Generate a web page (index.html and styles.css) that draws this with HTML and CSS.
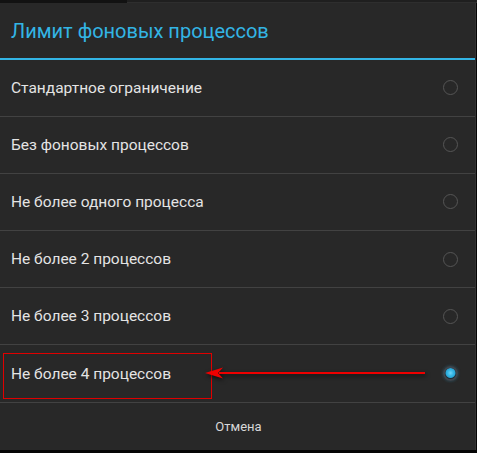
FILE: index.html
```
<!DOCTYPE html>
<html lang="ru">
<head>
<meta charset="utf-8">
<title>Лимит фоновых процессов</title>
<link rel="stylesheet" href="styles.css">
</head>
<body>
<div class="topstrip"><div class="ts-left"></div><div class="ts-right"></div></div>
<div class="dialog">
  <div class="title">Лимит фоновых процессов</div>
  <div class="list">
    <div class="row"><span class="label">Стандартное ограничение</span><span class="radio"></span></div>
    <div class="row"><span class="label">Без фоновых процессов</span><span class="radio"></span></div>
    <div class="row"><span class="label">Не более одного процесса</span><span class="radio"></span></div>
    <div class="row"><span class="label">Не более 2 процессов</span><span class="radio"></span></div>
    <div class="row"><span class="label">Не более 3 процессов</span><span class="radio"></span></div>
    <div class="row"><span class="label">Не более 4 процессов</span><span class="radio checked"></span></div>
  </div>
  <div class="footer"><span class="btn">Отмена</span></div>
  <div class="highlight"></div>
  <svg class="arrow" width="230" height="20" viewBox="0 0 230 20">
    <line x1="16" y1="10" x2="222" y2="10" stroke="#ee0000" stroke-width="2"/>
    <polygon points="2,10 20,4.5 15,10 20,15.5" fill="#ee0000"/>
  </svg>
</div>
<div class="bottomstrip"></div>
</body>
</html>
```
FILE: styles.css
```
html, body {
  margin: 0;
  padding: 0;
}
body {
  width: 477px;
  height: 453px;
  background: #050505;
  font-family: Roboto, "Noto Sans", sans-serif;
  overflow: hidden;
}
.topstrip {
  display: flex;
  height: 3px;
}
.ts-left {
  width: 127px;
  background: #121212;
}
.ts-right {
  flex: 1;
  background: #1f1f1f;
  border-bottom: 1px solid #2e2e2e;
  box-sizing: border-box;
}
.dialog {
  position: relative;
  width: 475px;
  height: 447px;
  background: #282828;
  border-right: 1px solid #333;
  display: flex;
  flex-direction: column;
}
.title {
  flex: none;
  height: 56.5px;
  box-sizing: border-box;
  border-bottom: 2px solid #33b5e5;
  display: flex;
  align-items: center;
  padding-left: 11px;
  padding-top: 2px;
  color: #33b5e5;
  font-size: 20px;
}
.list {
  display: flex;
  flex-direction: column;
}
.row {
  height: 57.2px;
  box-sizing: border-box;
  border-bottom: 1px solid #424242;
  display: flex;
  align-items: center;
  justify-content: space-between;
  padding: 0 17px 0 11px;
  color: #e4e4e4;
  font-size: 15.5px;
}
.radio {
  width: 15px;
  height: 15px;
  box-sizing: border-box;
  border-radius: 50%;
  border: 1.5px solid #555;
}
.radio.checked {
  border: 2px solid #3e454d;
  background: radial-gradient(circle at 50% 45%, #6fd4f7 0, #33b5e5 3px, #2aa6d6 4.5px, #1d2a33 5.5px, #232a30 100%);
  box-shadow: 0 0 3px rgba(51, 181, 229, 0.35);
}
.footer {
  flex: 1;
  display: flex;
  align-items: center;
  justify-content: center;
  padding-top: 1px;
}
.btn {
  color: #d8d8d8;
  font-size: 13px;
  padding-left: 2px;
}
.highlight {
  position: absolute;
  left: 3px;
  top: 350px;
  width: 209px;
  height: 46px;
  box-sizing: border-box;
  border: 1px solid #e00000;
}
.arrow {
  position: absolute;
  left: 203px;
  top: 360.3px;
  filter: drop-shadow(1px 2px 2px rgba(0, 0, 0, 0.7));
}
.bottomstrip {
  height: 3px;
  background: #050505;
}
```
